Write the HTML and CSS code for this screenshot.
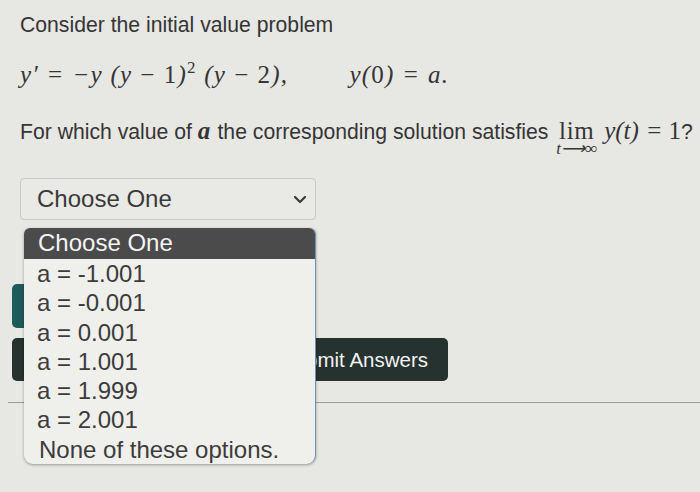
FILE: index.html
```html
<!DOCTYPE html>
<html>
<head>
<meta charset="utf-8">
<link rel="stylesheet" href="styles.css">
</head>
<body>
<div class="page">
  <p class="text intro">Consider the initial value problem</p>
  <div class="eq">
    <span class="math">y′<span class="rel">=</span>−y<span class="sp"></span>(y<span class="bin">−</span><span class="n">1</span>)<sup class="n">2</sup><span class="sp"></span>(y<span class="bin">−</span><span class="n">2</span>),</span>
    <span class="math">y(<span class="n">0</span>)<span class="rel">=</span>a.</span>
  </div>
  <p class="text question">For which value of <span class="math bold">a</span> the corresponding solution satisfies <span class="lim"><span class="lim-top">lim</span><span class="lim-sub">t⟶∞</span></span><span class="math tight">y(t)<span class="rel">=</span><span class="n">1</span></span>?</p>
  <div class="select">
    <span class="select-label">Choose One</span>
    <svg class="chev" width="14" height="10" viewBox="0 0 14 10"><path d="M2 2 L7 7 L12 2" fill="none" stroke="#3a3a3a" stroke-width="2.2" stroke-linecap="round" stroke-linejoin="round"/></svg>
  </div>
  <div class="actions">
    <div class="btn teal">Check Answer</div>
    <div class="btn dark">Submit Answers</div>
  </div>
</div>
<hr class="rule">
<ul class="menu">
  <li class="menu-head">Choose One</li>
  <li>a = -1.001</li>
  <li>a = -0.001</li>
  <li>a = 0.001</li>
  <li>a = 1.001</li>
  <li>a = 1.999</li>
  <li>a = 2.001</li>
  <li class="none">None of these options.</li>
</ul>
</body>
</html>
```
FILE: styles.css
```css
html, body {
  margin: 0;
  padding: 0;
}
body {
  width: 700px;
  height: 492px;
  background: #e7e7e4;
  position: relative;
  overflow: hidden;
  font-family: "Liberation Sans", Arial, sans-serif;
  color: #353535;
}
.page {
  padding: 12px 0 0 20px;
}
.text {
  margin: 0;
  font-size: 21.2px;
  line-height: 26px;
}
.eq {
  display: flex;
  gap: 61px;
  margin-top: 22px;
  line-height: 30px;
}
.math {
  font-family: "Liberation Serif", "Times New Roman", serif;
  font-style: italic;
  font-size: 25px;
  letter-spacing: 0.05em;
}
.math .n, .math .rel, .math .bin {
  font-style: normal;
}
.rel {
  margin: 0 0.36em;
}
.bin {
  margin: 0 0.32em;
}
.sp {
  display: inline-block;
  width: 0.3em;
}
.math sup {
  font-size: 17px;
  line-height: 0;
  vertical-align: 10px;
}
.bold {
  font-weight: bold;
}
.question {
  margin-top: 28px;
  white-space: nowrap;
}
.math.tight {
  letter-spacing: 0;
}
.math.tight .rel {
  margin: 0 0.28em 0 0.34em;
}
.lim {
  display: inline-flex;
  flex-direction: column;
  align-items: center;
  vertical-align: top;
  line-height: 26px;
  height: 26px;
  margin: 0 7px 0 2px;
}
.lim-top {
  font-family: "Liberation Serif", serif;
  font-size: 25px;
  letter-spacing: 0.03em;
}
.lim-sub {
  font-family: "Liberation Serif", serif;
  font-style: italic;
  font-size: 17px;
  line-height: 12px;
  margin-top: -1px;
}
.select {
  margin-top: 33px;
  width: 296px;
  height: 42px;
  box-sizing: border-box;
  border: 1px solid #c9c9c6;
  border-radius: 4px;
  background: #e9e9e6;
  display: flex;
  align-items: center;
  justify-content: space-between;
  padding: 0 8px 0 16px;
}
.select-label {
  font-size: 24px;
  color: #3a3a3a;
}
.chev {
  margin-top: 2px;
}
.actions {
  margin: 64px 0 0 -8px;
  display: flex;
  flex-direction: column;
  gap: 10px;
}
.btn {
  height: 44px;
  border-radius: 5px;
  color: #f2f2f2;
  font-size: 20.5px;
  display: flex;
  align-items: center;
  box-sizing: border-box;
}
.teal {
  width: 280px;
  background: #1d5a5a;
  padding-left: 40px;
}
.dark {
  width: 436px;
  height: 43px;
  background: #253230;
  justify-content: flex-end;
  padding-right: 20px;
}
.rule {
  margin: 21px 0 0 8px;
  border: 0;
  border-top: 1px solid #9c9c9a;
  height: 0;
}
.menu {
  position: absolute;
  left: 24px;
  top: 228px;
  width: 292px;
  margin: 0;
  padding: 0;
  list-style: none;
  background: #efefec;
  border-radius: 6px 6px 9px 9px;
  box-shadow: 0 1px 3px rgba(0,0,0,0.35);
  border-right: 1px solid #6f8fb5;
  box-sizing: border-box;
}
.menu li {
  height: 29.3px;
  line-height: 29px;
  padding-left: 13px;
  font-size: 24px;
  color: #3c3c3c;
}
.menu li.menu-head {
  height: 31px;
  line-height: 29px;
  background: #4b4b4b;
  color: #f4f4f4;
  border-radius: 6px 6px 0 0;
  padding-left: 14px;
}
.menu li.none {
  padding-left: 15px;
}
```
